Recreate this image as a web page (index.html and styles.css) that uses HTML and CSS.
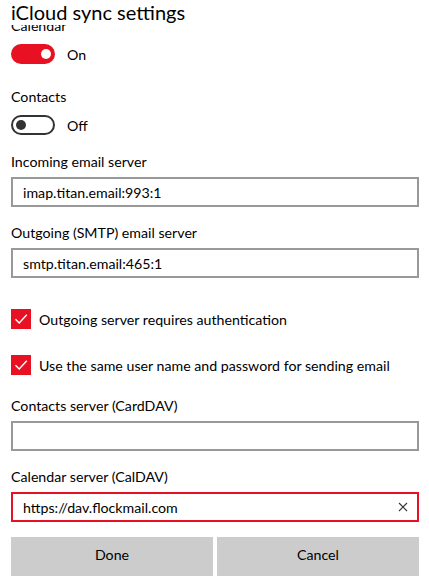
FILE: index.html
```html
<!DOCTYPE html>
<html lang="en">
<head>
    <meta charset="UTF-8">
    <meta name="viewport" content="width=device-width, initial-scale=1.0">
    <title>iCloud sync settings</title>
    <link rel="stylesheet" href="styles.css">
</head>
<body>
    <div class="page">
        <div class="title">iCloud sync settings</div>

        <div class="scroll">
            <div class="content">
                <div class="setting">
                    <div class="label">Calendar</div>
                    <div class="toggle-row">
                        <span class="toggle on"><span class="knob"></span></span>
                        <span class="toggle-text">On</span>
                    </div>
                </div>

                <div class="setting">
                    <div class="label">Contacts</div>
                    <div class="toggle-row">
                        <span class="toggle off"><span class="knob"></span></span>
                        <span class="toggle-text">Off</span>
                    </div>
                </div>

                <div class="field first">
                    <div class="label">Incoming email server</div>
                    <div class="textbox">imap.titan.email:993:1</div>
                </div>

                <div class="field">
                    <div class="label">Outgoing (SMTP) email server</div>
                    <div class="textbox">smtp.titan.email:465:1</div>
                </div>

                <div class="checks">
                    <div class="check-row">
                        <span class="checkbox">
                            <svg width="20" height="20" viewBox="0 0 20 20"><path d="M4.5 10.2 L8.2 14 L15.8 5.8" fill="none" stroke="#fff" stroke-width="1.4"/></svg>
                        </span>
                        <span>Outgoing server requires authentication</span>
                    </div>
                    <div class="check-row">
                        <span class="checkbox">
                            <svg width="20" height="20" viewBox="0 0 20 20"><path d="M4.5 10.2 L8.2 14 L15.8 5.8" fill="none" stroke="#fff" stroke-width="1.4"/></svg>
                        </span>
                        <span>Use the same user name and password for sending email</span>
                    </div>
                </div>

                <div class="field after-checks">
                    <div class="label">Contacts server (CardDAV)</div>
                    <div class="textbox"></div>
                </div>

                <div class="field">
                    <div class="label">Calendar server (CalDAV)</div>
                    <div class="textbox focused">
                        <span>https://dav.flockmail.com</span>
                        <svg class="clear" width="10" height="10" viewBox="0 0 10 10"><path d="M1 1 L9 9 M9 1 L1 9" stroke="#333" stroke-width="1.1"/></svg>
                    </div>
                </div>

                <div class="buttons">
                    <button class="btn">Done</button>
                    <button class="btn">Cancel</button>
                </div>
            </div>
        </div>
    </div>
</body>
</html>
```

FILE: styles.css
```css
html, body {
    margin: 0;
    padding: 0;
    height: 100%;
    overflow: hidden;
    background: #fff;
}
body {
    font-family: Lato, "Noto Sans", sans-serif;
    font-size: 14.2px;
    color: #000;
}
.page {
    height: 576px;
    display: flex;
    flex-direction: column;
    padding: 0 10px 0 11px;
}
.title {
    height: 25px;
    flex: none;
    font-size: 20px;
    line-height: 24px;
    white-space: nowrap;
}
.scroll {
    flex: 1;
    overflow: hidden;
}
.content {
    margin-top: -9px;
}
.label {
    line-height: 20px;
    height: 20px;
    white-space: nowrap;
}
.setting {
    margin-bottom: 23px;
}
.setting + .setting {
    margin-bottom: 0;
}
.toggle-row {
    display: flex;
    align-items: center;
    margin-top: 8px;
    height: 20px;
}
.toggle {
    box-sizing: border-box;
    width: 44px;
    height: 20px;
    border-radius: 10px;
    display: flex;
    align-items: center;
    padding: 0 4px;
}
.toggle .knob {
    width: 10px;
    height: 10px;
    border-radius: 50%;
}
.toggle.on {
    background: #e81123;
    justify-content: flex-end;
}
.toggle.on .knob {
    background: #fff;
}
.toggle.off {
    border: 2px solid #333;
    padding: 0 3px;
}
.toggle.off .knob {
    background: #333;
}
.toggle-text {
    margin-left: 12px;
}
.field {
    margin-top: 16px;
}
.field.first {
    margin-top: 17px;
}
.field .label {
    margin-bottom: 5px;
}
.textbox {
    box-sizing: border-box;
    height: 30px;
    border: 2px solid #999;
    padding: 0 10px;
    display: flex;
    align-items: center;
    justify-content: space-between;
    white-space: nowrap;
}
.textbox.focused {
    border-color: #e81123;
}
.clear {
    margin-right: -1px;
}
.checks {
    margin-top: 31px;
    display: flex;
    flex-direction: column;
    gap: 26px;
}
.check-row {
    display: flex;
    align-items: center;
    height: 20px;
    white-space: nowrap;
}
.checkbox {
    width: 20px;
    height: 20px;
    background: #e81123;
    margin-right: 8px;
    flex: none;
}
.checkbox svg {
    display: block;
}
.field.after-checks {
    margin-top: 21px;
}
.buttons {
    margin-top: 15px;
    display: flex;
    gap: 4px;
}
.btn {
    flex: 1;
    height: 40px;
    border: none;
    background: #ccc;
    font-family: inherit;
    font-size: 14.2px;
    color: #000;
    padding: 0 0 6px;
}
```
